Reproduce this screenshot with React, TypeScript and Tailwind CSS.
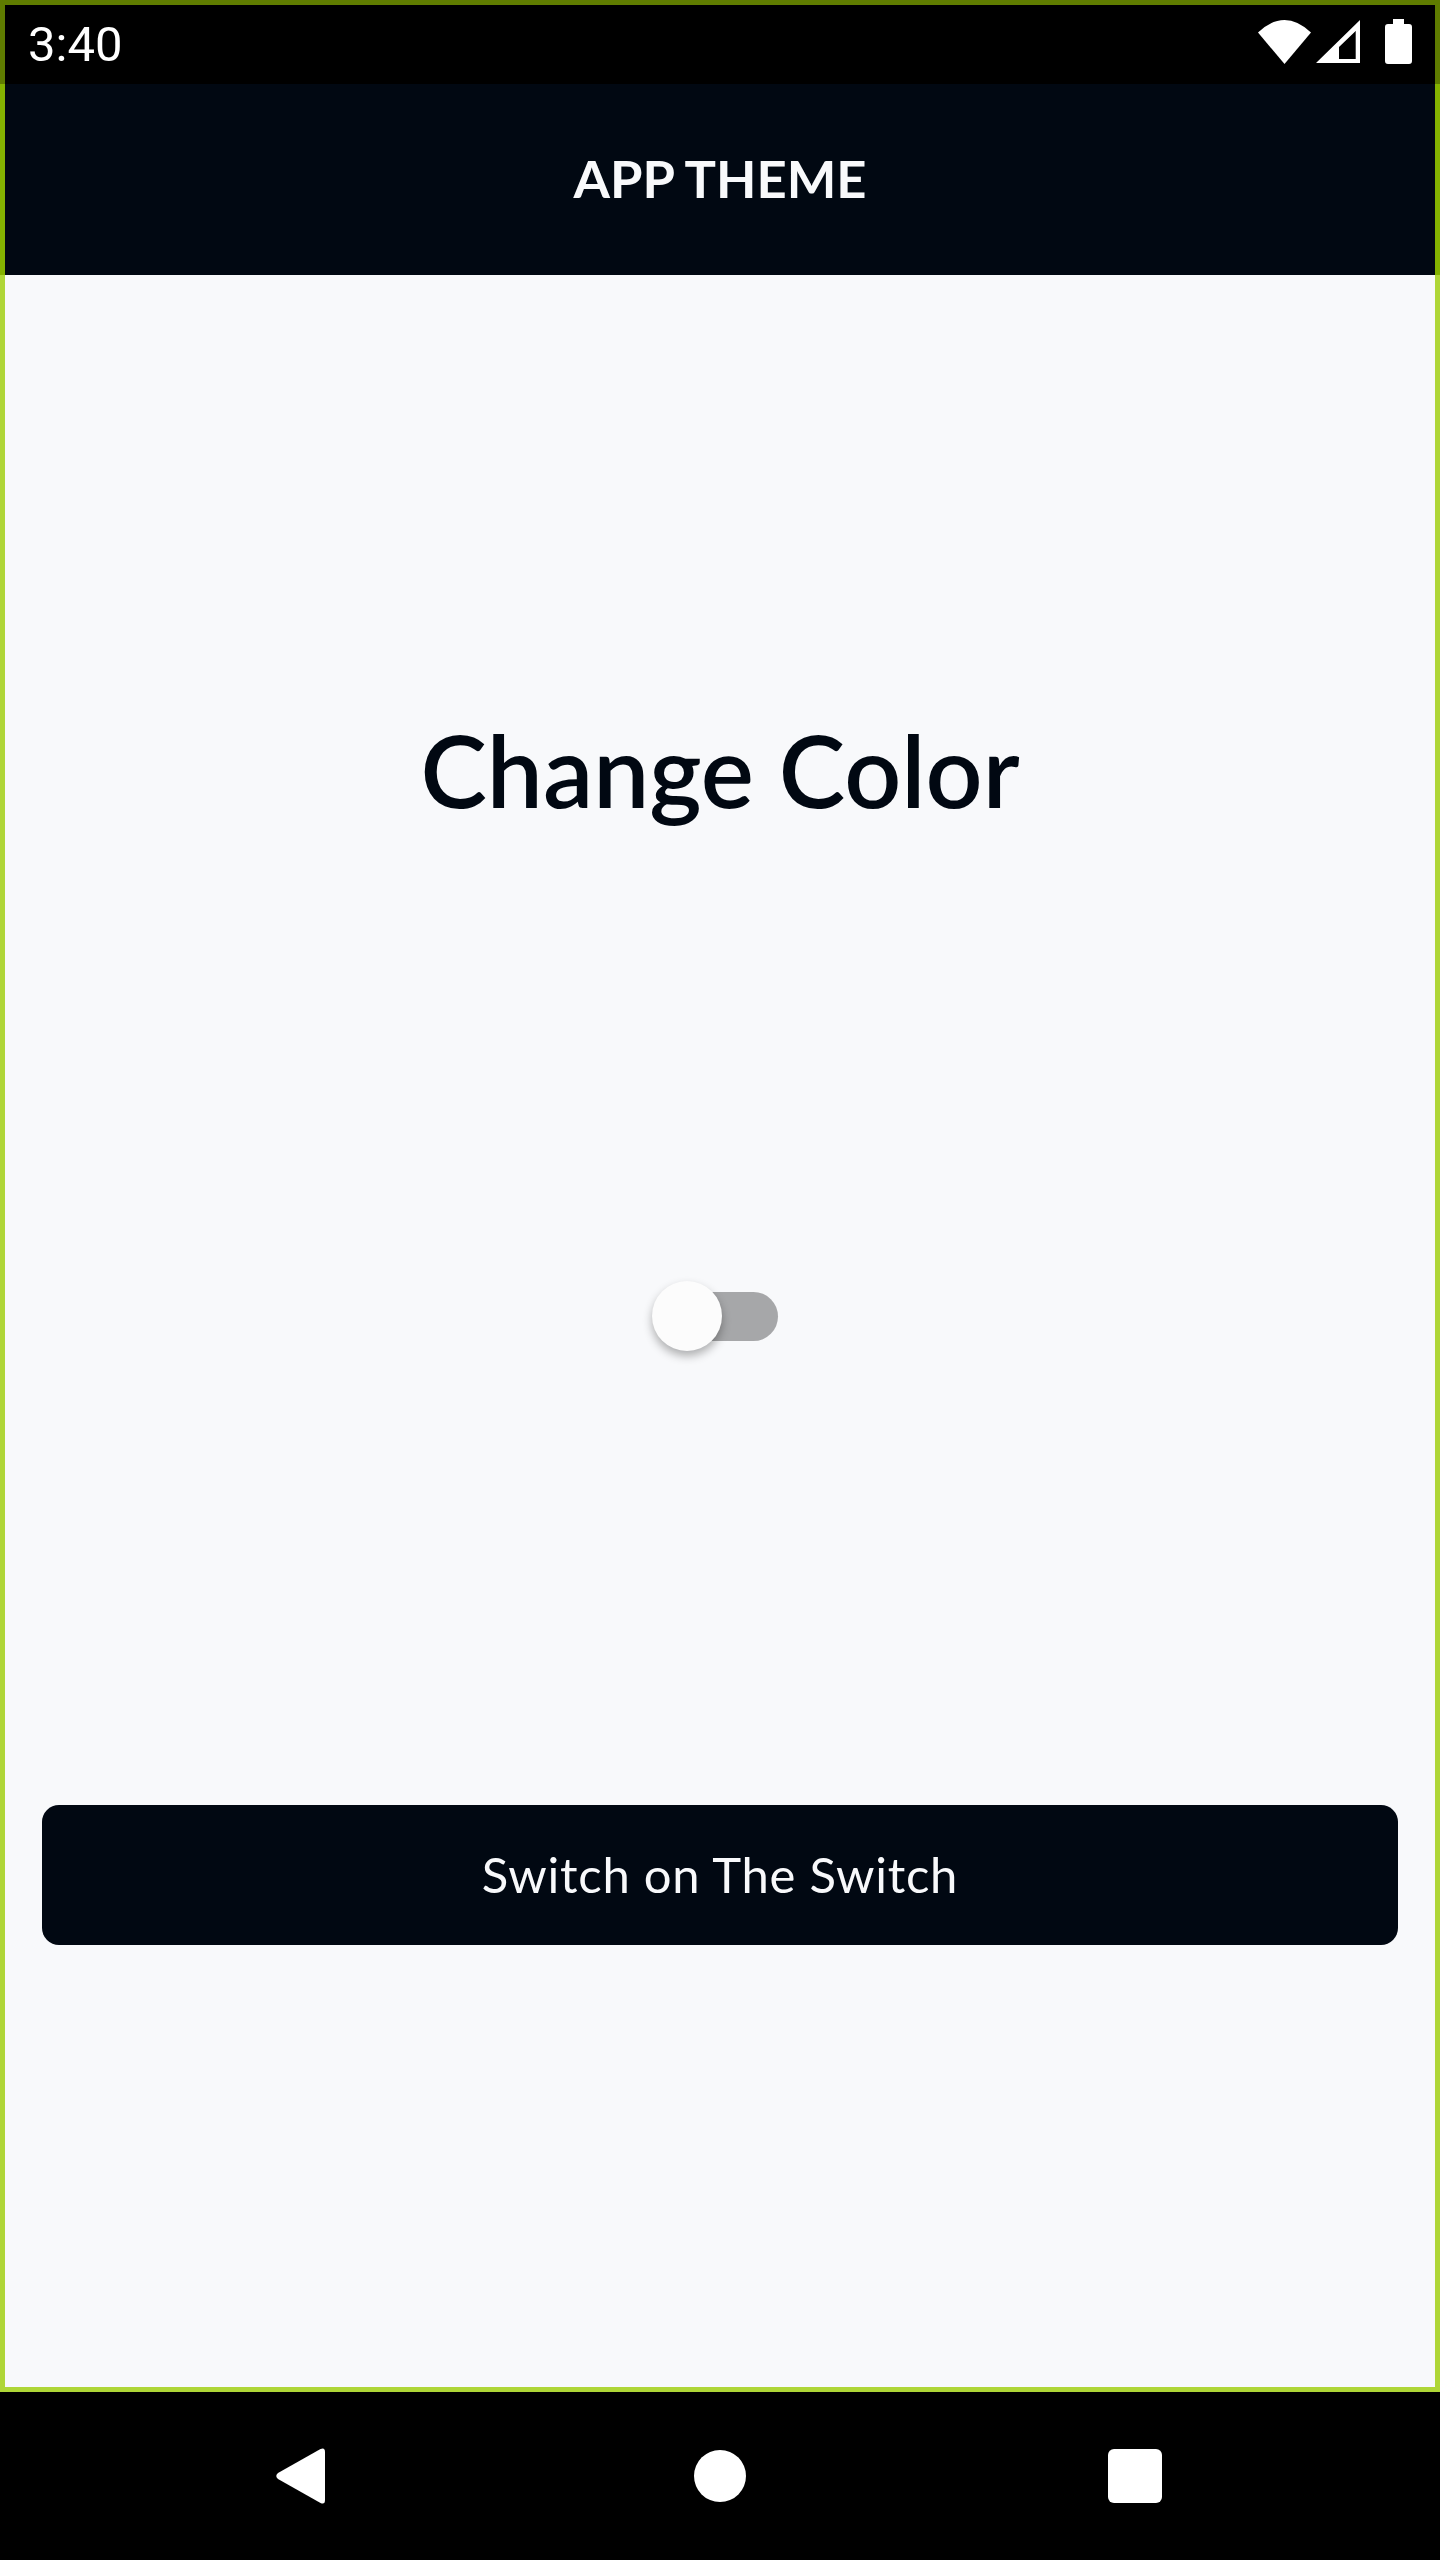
export default function App() {
  return (
    <div className="flex h-[2560px] w-[1440px] flex-col bg-black font-['Lato',sans-serif]">
      <div className="flex h-[84px] shrink-0 items-center justify-between border-t-[5px] border-r-[5px] border-l-[5px] border-[#5f7c00] bg-black pr-[23px] pl-[23px]">
        <span className="font-['Roboto',sans-serif] text-[49px] leading-none text-white">3:40</span>
        <div className="mb-[6px] flex items-center">
          <svg width="53" height="44" viewBox="0 0 53 44" className="mr-[5px]">
            <path d="M26.500 44 L0 12.500 Q26.500 -12.500 53 12.500 Z" fill="#fff" />
          </svg>
          <svg width="44" height="43" viewBox="0 0 44 43" className="mr-[25px]">
            <path fillRule="evenodd" d="M0 43 L44 0 V43 Z M23 27 L39.700 11 V39 H23 Z" fill="#fff" />
          </svg>
          <svg width="27" height="45" viewBox="0 0 27 45">
            <path d="M8 0 H19 V5 H24 Q27 5 27 8 V42 Q27 45 24 45 H3 Q0 45 0 42 V8 Q0 5 3 5 H8 Z" fill="#fff" />
          </svg>
        </div>
      </div>
      <div className="flex h-[191px] shrink-0 items-center justify-center border-r-[5px] border-l-[5px] border-[#84b200] bg-[#010812] pb-[3px]">
        <span className="text-[52.500px] leading-none font-bold text-[#f8f9fb]">APP THEME</span>
      </div>
      <main className="flex h-[2117px] shrink-0 flex-col items-center border-r-[5px] border-b-[5px] border-l-[5px] border-[#afd637] bg-[#f8f9fb]">
        <h1 className="mt-[439px] text-[100px] leading-[110px] font-semibold text-[#010812]">Change Color</h1>
        <div className="mt-[457px] mr-[10px] flex h-[70px] w-[126px] items-center justify-end">
          <div className="h-[49px] w-[104px] rounded-full bg-[#a6a7a9]" />
          <div className="mr-[56px] -ml-[126px] h-[70px] w-[70px] shrink-0 self-start rounded-full bg-[#fcfcfc] shadow-[0_5px_10px_rgba(0,0,0,0.3)]" />
        </div>
        <button className="mt-[454px] flex h-[140px] w-[1356px] items-center justify-center rounded-[17px] bg-[#010812] text-[49px] tracking-[0.75px] text-[#f8f9fb]">
          Switch on The Switch
        </button>
      </main>
      <div className="flex h-[168px] shrink-0 items-center bg-black pl-[276px]">
        <svg width="49" height="56" viewBox="0 0 49 56">
          <path d="M44.500 1 Q49 -1 49 4 V52 Q49 57 44.500 55 L2 31 Q-1.500 28 2 25 Z" fill="#fff" />
        </svg>
        <div className="ml-[369px] h-[52px] w-[52px] rounded-full bg-white" />
        <div className="ml-[362px] h-[54px] w-[54px] rounded-[6px] bg-white" />
      </div>
    </div>
  );
}
